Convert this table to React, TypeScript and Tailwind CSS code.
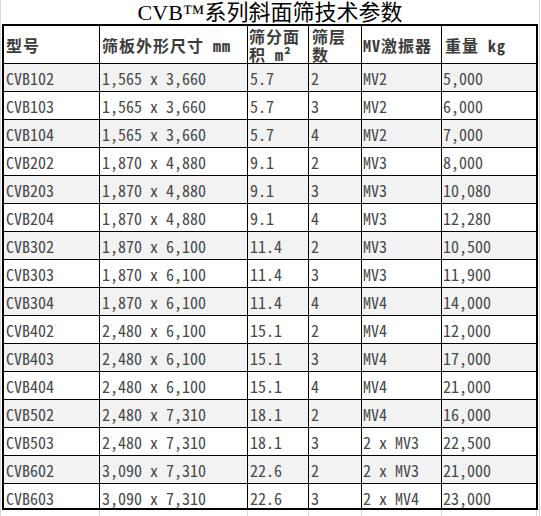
import React from "react";

const rows: string[][] = [
  ["CVB102", "1,565 x 3,660", "5.7", "2", "MV2", "5,000"],
  ["CVB103", "1,565 x 3,660", "5.7", "3", "MV2", "6,000"],
  ["CVB104", "1,565 x 3,660", "5.7", "4", "MV2", "7,000"],
  ["CVB202", "1,870 x 4,880", "9.1", "2", "MV3", "8,000"],
  ["CVB203", "1,870 x 4,880", "9.1", "3", "MV3", "10,080"],
  ["CVB204", "1,870 x 4,880", "9.1", "4", "MV3", "12,280"],
  ["CVB302", "1,870 x 6,100", "11.4", "2", "MV3", "10,500"],
  ["CVB303", "1,870 x 6,100", "11.4", "3", "MV3", "11,900"],
  ["CVB304", "1,870 x 6,100", "11.4", "4", "MV4", "14,000"],
  ["CVB402", "2,480 x 6,100", "15.1", "2", "MV4", "12,000"],
  ["CVB403", "2,480 x 6,100", "15.1", "3", "MV4", "17,000"],
  ["CVB404", "2,480 x 6,100", "15.1", "4", "MV4", "21,000"],
  ["CVB502", "2,480 x 7,310", "18.1", "2", "MV4", "16,000"],
  ["CVB503", "2,480 x 7,310", "18.1", "3", "2 x MV3", "22,500"],
  ["CVB602", "3,090 x 7,310", "22.6", "2", "2 x MV3", "21,000"],
  ["CVB603", "3,090 x 7,310", "22.6", "3", "2 x MV4", "23,000"],
];

const mono = {
  fontFamily: '"Noto Sans Mono CJK SC", "Liberation Mono", "Noto Sans CJK SC", monospace',
};

const headerPad = ["pl-[2px]", "pl-[2px]", "pl-[1px]", "pl-[3px]", "pl-[1px]", "pl-[3px]"];
const cellPad = ["pl-[2px]", "pl-[2px]", "pl-[2px]", "pl-[2px]", "pl-[1px]", "pl-[1px]"];

export default function App() {
  return (
    <div className="w-[541px] h-[516px] bg-white flex overflow-hidden">
      <div className="w-px shrink-0 bg-[#d9d9d9]" />
      <div className="w-px shrink-0" />
      <div className="w-[536px] shrink-0 flex flex-col">
        <div
          className="h-[24px] flex items-center justify-center pt-[2px] text-[22px] leading-[22px] text-black whitespace-nowrap"
          style={{ fontFamily: '"Liberation Serif", "Noto Sans CJK SC", serif' }}
        >
          CVB™系列斜面筛技术参数
        </div>
        <div
          className="border-2 border-black grid grid-cols-[96px_148px_61px_53px_80px_94px] text-[#3c3c3c]"
          style={mono}
        >
          {[
            <>型号</>,
            <>筛板外形尺寸 mm</>,
            <>筛分面<br />积 m²</>,
            <>筛层<br />数</>,
            <>MV激振器</>,
            <>重量 kg</>,
          ].map((h, i) => (
            <div
              key={"h" + i}
              className={`h-[38px] border-b border-black ${i < 5 ? "border-r" : ""} flex items-center ${headerPad[i]} font-bold text-[16px] leading-[18px] tracking-[1px] whitespace-nowrap`}
            >
              <div>{h}</div>
            </div>
          ))}
          {rows.map((r, ri) => {
            const last = ri === rows.length - 1;
            return r.map((c, ci) => (
              <div
                key={ri + "-" + ci}
                className={`${last ? "h-[24px] pt-[3px]" : "h-[28px] border-b"} border-black ${ci < 5 ? "border-r" : ""} ${ri % 2 === 0 ? "bg-[#f2f2f2]" : "bg-white"} flex items-center ${cellPad[ci]} text-[16px] leading-[18px] text-[#484848] whitespace-pre`}
              >
                {c}
              </div>
            ));
          })}
        </div>
        <div className="h-[6px] flex pl-[2px]">
          <div className="w-[96px] border-r border-[#d9d9d9]" />
          <div className="w-[148px] border-r border-[#d9d9d9]" />
          <div className="w-[61px] border-r border-[#d9d9d9]" />
          <div className="w-[53px] border-r border-[#d9d9d9]" />
          <div className="w-[80px] border-r border-[#d9d9d9]" />
          <div className="w-[95px] border-r border-[#d9d9d9]" />
        </div>
      </div>
      <div className="w-[3px] shrink-0 flex">
        <div className="w-px flex flex-col">
          <div className="h-[64px] border-b border-[#d9d9d9] shrink-0" />
          {Array.from({ length: 15 }).map((_, i) => (
            <div key={i} className="h-[28px] border-b border-[#d9d9d9] shrink-0" />
          ))}
        </div>
        <div className="w-px bg-[#d9d9d9]" />
        <div className="w-px" />
      </div>
    </div>
  );
}
